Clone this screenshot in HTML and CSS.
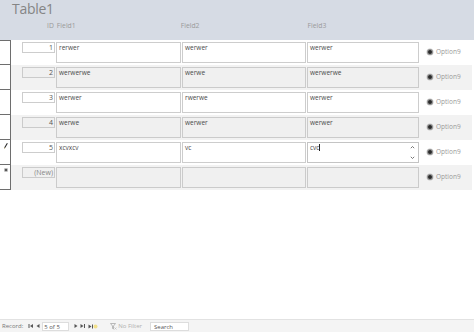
FILE: index.html
```html
<!DOCTYPE html>
<html>
<head>
<meta charset="utf-8">
<link rel="stylesheet" href="styles.css">
</head>
<body>
<div class="form">
  <header class="hdr">
    <div class="title">Table1</div>
    <div class="labels">
      <span class="lab lab-id">ID</span>
      <span class="lab lab-f1">Field1</span>
      <span class="lab lab-f2">Field2</span>
      <span class="lab lab-f3">Field3</span>
    </div>
  </header>
  <main class="grid">
    <div class="row">
      <div class="sel first"></div>
      <div class="cells">
        <div class="box id">1</div>
        <div class="box f1">rerwer</div>
        <div class="box f2">werwer</div>
        <div class="box f3">werwer</div>
        <div class="opt"><span class="radio"></span><span class="opt-t">Option9</span></div>
      </div>
    </div>
    <div class="row alt">
      <div class="sel"></div>
      <div class="cells">
        <div class="box id">2</div>
        <div class="box f1">werwerwe</div>
        <div class="box f2">werwe</div>
        <div class="box f3">werwerwe</div>
        <div class="opt"><span class="radio"></span><span class="opt-t">Option9</span></div>
      </div>
    </div>
    <div class="row">
      <div class="sel"></div>
      <div class="cells">
        <div class="box id">3</div>
        <div class="box f1">werwer</div>
        <div class="box f2">rwerwe</div>
        <div class="box f3">werwer</div>
        <div class="opt"><span class="radio"></span><span class="opt-t">Option9</span></div>
      </div>
    </div>
    <div class="row alt">
      <div class="sel"></div>
      <div class="cells">
        <div class="box id">4</div>
        <div class="box f1">werwe</div>
        <div class="box f2">werwer</div>
        <div class="box f3">werwer</div>
        <div class="opt"><span class="radio"></span><span class="opt-t">Option9</span></div>
      </div>
    </div>
    <div class="row">
      <div class="sel">
        <svg class="sel-ico pencil" width="4" height="6" viewBox="0 0 4 6"><path d="M3.8 0.4 L1.4 4.4 L0.3 5.7 L0.5 4 L2.9 0 Z" fill="#222"/><path d="M0.3 5.7 L0.5 4.6 L1.2 5 Z" fill="#c9a53a"/></svg>
      </div>
      <div class="cells">
        <div class="box id">5</div>
        <div class="box f1">xcvxcv</div>
        <div class="box f2">vc</div>
        <div class="box f3 active">cvc<span class="caret"></span>
          <svg class="scroll" width="5" height="15" viewBox="0 0 5 15"><path d="M0.8 3.2 L2.5 1.5 L4.2 3.2" fill="none" stroke="#666" stroke-width="0.9"/><path d="M0.8 11.8 L2.5 13.5 L4.2 11.8" fill="none" stroke="#666" stroke-width="0.9"/></svg>
        </div>
        <div class="opt"><span class="radio"></span><span class="opt-t">Option9</span></div>
      </div>
    </div>
    <div class="row alt">
      <div class="sel last">
        <svg class="sel-ico star" width="4" height="4" viewBox="0 0 4 4"><path d="M2 0.2 V3.8 M0.3 1 L3.7 3 M0.3 3 L3.7 1" stroke="#333" stroke-width="0.8"/></svg>
      </div>
      <div class="cells">
        <div class="box id new">(New)</div>
        <div class="box f1"></div>
        <div class="box f2"></div>
        <div class="box f3"></div>
        <div class="opt"><span class="radio"></span><span class="opt-t">Option9</span></div>
      </div>
    </div>
  </main>
  <footer class="nav">
    <span class="rec">Record:</span>
    <svg class="nb" width="6" height="6" viewBox="0 0 6 6"><rect x="0.5" y="1" width="1" height="4" fill="#555"/><path d="M5 1 L2 3 L5 5 Z" fill="#555"/></svg>
    <svg class="nb" width="4" height="6" viewBox="0 0 4 6"><path d="M3.5 1 L0.5 3 L3.5 5 Z" fill="#555"/></svg>
    <span class="pos">5 of 5</span>
    <svg class="nb nb-next" width="4" height="6" viewBox="0 0 4 6"><path d="M0.5 1 L3.5 3 L0.5 5 Z" fill="#555"/></svg>
    <svg class="nb" width="6" height="6" viewBox="0 0 6 6"><path d="M0.5 1 L3.5 3 L0.5 5 Z" fill="#555"/><rect x="4" y="1" width="1" height="4" fill="#555"/></svg>
    <svg class="nb" width="10" height="7" viewBox="0 0 10 7"><path d="M0.5 1.5 L3.5 3.5 L0.5 5.5 Z" fill="#555"/><rect x="4" y="1.5" width="1" height="4" fill="#555"/><circle cx="7.5" cy="3.5" r="2" fill="#f2e08a"/></svg>
    <span class="filter">
      <svg width="7" height="7" viewBox="0 0 7 7"><path d="M0.5 0.5 H5.5 L3.5 3 V6 L2.5 5.5 V3 Z" fill="none" stroke="#aaa" stroke-width="0.8"/><path d="M4.5 4.5 L6.5 6.5 M6.5 4.5 L4.5 6.5" stroke="#bbb" stroke-width="0.7"/></svg>
      <span>No Filter</span>
    </span>
    <span class="search">Search</span>
  </footer>
</div>
</body>
</html>
```
FILE: styles.css
```css
* { box-sizing: border-box; }
html, body { margin: 0; padding: 0; background: #fff; }
body {
  width: 474px;
  height: 332px;
  overflow: hidden;
  font-family: "Open Sans", "Noto Sans", sans-serif;
}
.form {
  display: flex;
  flex-direction: column;
  height: 332px;
}
.hdr {
  height: 40px;
  background: #d6dbe4;
  padding: 0 0 0 12px;
  display: flex;
  flex-direction: column;
}
.title {
  font-size: 14px;
  line-height: 17px;
  color: #858585;
  letter-spacing: -0.3px;
}
.labels {
  display: flex;
  margin-top: 4px;
  font-size: 6.8px;
  line-height: 9px;
  color: #9a9a9a;
}
.lab-id { margin-left: 35px; }
.lab-f1 { margin-left: 3px; }
.lab-f2 { margin-left: 105px; }
.lab-f3 { margin-left: 108px; }

.grid {
  flex: 1;
  display: flex;
  flex-direction: column;
}
.row {
  display: flex;
  height: 25px;
  width: 472px;
}
.row.alt { background: #f2f2f2; }
.sel {
  width: 11px;
  flex: none;
  background: #fff;
  border-right: 1px solid #6e6e6e;
  border-bottom: 1px solid #6e6e6e;
  position: relative;
}
.sel.first { border-top: 1px solid #6e6e6e; }
.sel-ico {
  position: absolute;
  left: 4px;
  top: 3px;
}
.cells {
  display: flex;
  align-items: flex-start;
  padding-top: 2px;
  padding-left: 11px;
  flex: 1;
}
.box {
  border: 1px solid #cdcdcd;
  background: #fff;
  font-size: 6.5px;
  line-height: 8px;
  color: #4a4a4a;
  padding: 1px 2px;
  height: 21px;
  position: relative;
}
.alt .box { background: #f0f0f0; border-color: #cbcbcb; }
.box.id {
  width: 33px;
  height: 11px;
  text-align: right;
  padding: 1px 1px 0 0;
  line-height: 8px;
  font-size: 7px;
  color: #555;
}
.box.id.new { color: #888; }
.box.f1 { width: 125px; margin-left: 1px; }
.box.f2 { width: 124px; margin-left: 1px; }
.box.f3 { width: 112px; margin-left: 1px; }
.box.active { border-color: #c4c4c4; }
.caret {
  display: inline-block;
  width: 1px;
  height: 7px;
  background: #222;
  vertical-align: -1px;
}
.scroll {
  position: absolute;
  right: 3px;
  top: 2px;
}
.opt {
  display: flex;
  align-items: center;
  margin-left: 8px;
  margin-top: 6px;
}
.radio {
  width: 6px;
  height: 6px;
  border-radius: 50%;
  background: #2a2a2a;
  border: 1px solid #999;
  box-shadow: 0 0 0 0.5px #c4c4c4;
}
.opt-t {
  margin-left: 3px;
  font-size: 6.5px;
  color: #999;
  line-height: 8px;
}

.nav {
  height: 13px;
  background: #f4f4f4;
  border-top: 1px solid #e2e2e2;
  display: flex;
  align-items: center;
  padding-left: 2px;
  font-size: 6px;
  color: #777;
}
.rec { margin-right: 3px; }
.nb { margin-left: 2px; flex: none; }
.pos {
  margin-left: 2px;
  width: 27px;
  height: 9px;
  line-height: 8px;
  background: #fff;
  border: 1px solid #ddd;
  padding-left: 1px;
  color: #555;
}
.nb-next { margin-left: 5px; }
.filter {
  margin-left: 12px;
  display: flex;
  align-items: center;
  color: #b0b0b0;
  gap: 1px;
}
.search {
  margin-left: 8px;
  width: 39px;
  height: 9px;
  line-height: 8px;
  background: #fff;
  border: 1px solid #ddd;
  padding-left: 3px;
  color: #555;
}
```
